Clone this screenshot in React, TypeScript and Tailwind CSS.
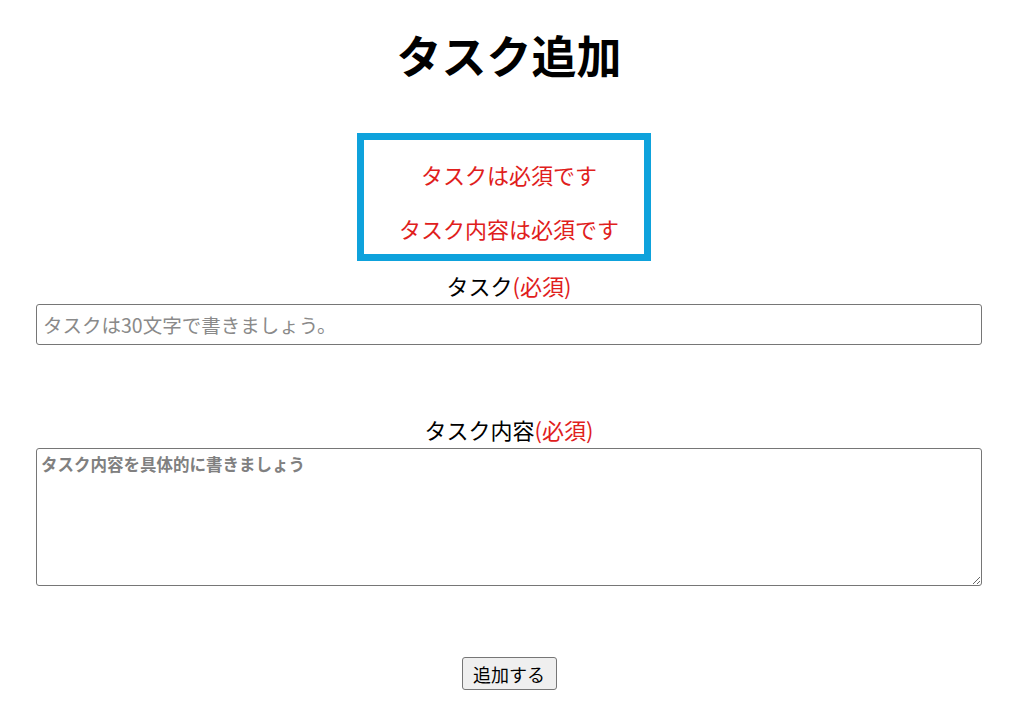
import React from "react";

const jp = "font-['Noto_Sans_CJK_JP','Noto_Sans',sans-serif]";

export default function App() {
  return (
    <div className={`min-h-[726px] w-[1024px] bg-white text-black ${jp}`}>
      <div className="flex w-[1018px] flex-col items-center pt-[26px]">
        <h1 className="text-[45px] leading-[57px] font-bold">タスク追加</h1>

        <div className="mt-[50px] mr-[10px] flex h-[128px] w-[294px] flex-col items-center border-[7px] border-[#0ea2dc] pt-[18px] pl-[10px] text-[22px] leading-[32px] text-[#e0201c]">
          <p>タスクは必須です</p>
          <p className="mt-[22px]">タスク内容は必須です</p>
        </div>

        <label className="mt-[9px] text-[22px] leading-[30px]">
          タスク<span className="text-[#e0201c]">(必須)</span>
        </label>
      </div>

      <input
        type="text"
        placeholder="タスクは30文字で書きましょう。"
        className="mt-[4px] ml-[36px] block h-[41px] w-[946px] rounded-[3px] border border-[#767676] px-[6px] text-[19.5px] placeholder:text-[#8a8a8a] outline-none"
      />

      <div className="flex w-[1018px] justify-center mt-[69px]">
        <label className="text-[22px] leading-[30px]">
          タスク内容<span className="text-[#e0201c]">(必須)</span>
        </label>
      </div>

      <textarea
        placeholder="タスク内容を具体的に書きましょう"
        className="mt-[4px] ml-[36px] block h-[138px] w-[946px] rounded-[3px] border border-[#767676] px-[4px] py-[3px] text-[16.5px] font-semibold leading-[24px] placeholder:text-[#808080] outline-none"
      />

      <div className="mt-[71px] flex w-[1018px] justify-center">
        <button className="h-[33px] w-[95px] rounded-[3px] border border-[#767676] bg-[#efefef] text-[18px] leading-none">
          追加する
        </button>
      </div>
    </div>
  );
}
